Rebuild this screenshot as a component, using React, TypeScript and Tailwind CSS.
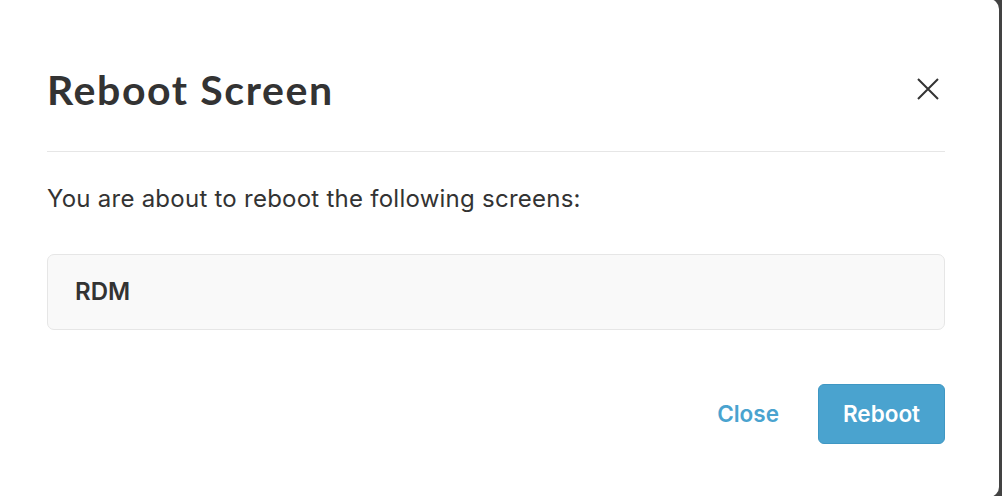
import React from "react";

export default function App() {
  return (
    <div className="w-[1002px] h-[496px] overflow-hidden bg-[#434343]">
      <div
        className="w-[999px] h-[498px] -mt-[1px] bg-white rounded-r-[10px] flex flex-col pl-[47px] pr-[54px]"
        style={{ fontFamily: "Inter, 'Noto Sans', sans-serif" }}
      >
        <div className="h-[153px] pt-[28px] flex items-center justify-between border-b border-[#e6e6e6]">
          <h1
            className="text-[41px] font-bold text-[#333333] tracking-[1.6px] leading-none"
            style={{ fontFamily: "Lato, 'Noto Sans', sans-serif" }}
          >
            Reboot Screen
          </h1>
          <button className="w-[24px] h-[24px] flex items-center justify-center mr-[5px]">
            <svg width="22" height="22" viewBox="0 0 22 22" fill="none">
              <path d="M1 1L21 21M21 1L1 21" stroke="#333" strokeWidth="2" />
            </svg>
          </button>
        </div>
        <p className="mt-[32px] text-[24px] text-[#333333] leading-[30px] tracking-[0.25px]">
          You are about to reboot the following screens:
        </p>
        <div className="mt-[40px] h-[76px] rounded-[7px] border border-[#e6e6e6] bg-[#f9f9f9] flex items-center pl-[27px]">
          <span className="text-[24px] font-semibold text-[#333333]">RDM</span>
        </div>
        <div className="mt-[54px] flex items-center justify-end gap-[39px]">
          <button className="text-[22.5px] font-semibold text-[#4aa3cf]">Close</button>
          <button className="w-[127px] h-[60px] rounded-[6px] bg-[#4aa3cf] border border-[#3f97c3] text-white text-[22.5px] font-semibold">
            Reboot
          </button>
        </div>
      </div>
    </div>
  );
}
